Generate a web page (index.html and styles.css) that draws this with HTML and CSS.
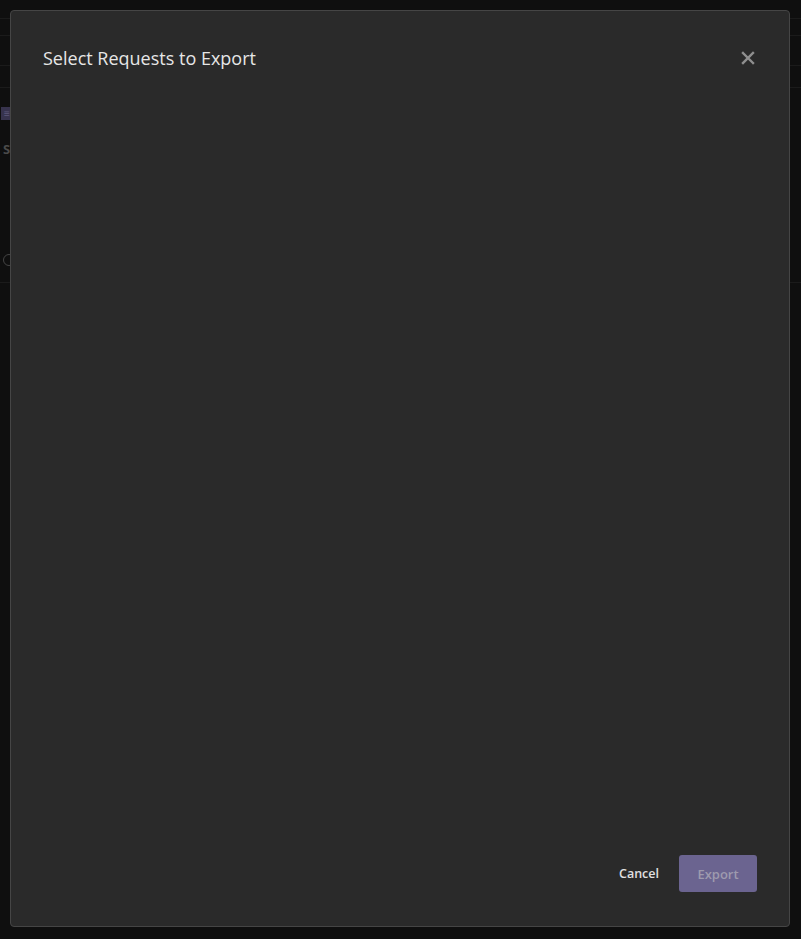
FILE: index.html
```html
<!DOCTYPE html>
<html lang="en">
<head>
<meta charset="utf-8">
<title>Select Requests to Export</title>
<link rel="stylesheet" href="styles.css">
</head>
<body>
<div class="app">
  <div class="app-line l1"></div>
  <div class="app-line l2"></div>
  <div class="app-line l3"></div>
  <div class="app-line l4"></div>
  <div class="app-badge">≡</div>
  <div class="app-s">S</div>
  <div class="app-clock"></div>
  <div class="app-line l5"></div>
</div>
<div class="backdrop">
  <div class="modal">
    <div class="modal-header">
      <h2 class="modal-title">Select Requests to Export</h2>
      <button class="close-btn" aria-label="Close">
        <svg width="14" height="14" viewBox="0 0 14 14"><path d="M2 2 L12 12 M12 2 L2 12" stroke="#8f8f8f" stroke-width="2.4" stroke-linecap="square"/></svg>
      </button>
    </div>
    <div class="modal-body"></div>
    <div class="modal-footer">
      <button class="btn-cancel">Cancel</button>
      <button class="btn-export" disabled>Export</button>
    </div>
  </div>
</div>
</body>
</html>
```
FILE: styles.css
```css
html, body {
  margin: 0;
  padding: 0;
  height: 100%;
  background: #0f0f0f;
  font-family: "Open Sans", "Noto Sans", sans-serif;
  overflow: hidden;
}
.app {
  position: relative;
  width: 100%;
  height: 100%;
}
.app-line {
  position: absolute;
  left: 0;
  right: 0;
  height: 1px;
  background: #1b1b1b;
}
.l1 { top: 18px; }
.l2 { top: 35px; }
.l3 { top: 65px; }
.l4 { top: 87px; }
.l5 { top: 282px; }
.app-badge {
  position: absolute;
  left: 1px;
  top: 107px;
  width: 14px;
  height: 13px;
  background: #37334d;
  color: #5d587a;
  font-size: 10px;
  line-height: 13px;
  padding-left: 3px;
}
.app-s {
  position: absolute;
  left: 3px;
  top: 140px;
  color: #4a4a4a;
  font-weight: 700;
  font-size: 13px;
}
.app-clock {
  position: absolute;
  left: 3px;
  top: 254px;
  width: 10px;
  height: 10px;
  border: 1.5px solid #444;
  border-radius: 50%;
}
.backdrop {
  position: absolute;
  inset: 0;
  padding: 10px 11px 12px 10px;
  box-sizing: border-box;
  display: flex;
}
.modal {
  flex: 1;
  display: flex;
  flex-direction: column;
  background: #2a2a2a;
  border: 1px solid #454545;
  border-radius: 4px;
  box-sizing: border-box;
}
.modal-header {
  display: flex;
  align-items: center;
  justify-content: space-between;
  padding: 33px 32px 0 32px;
}
.modal-title {
  margin: 0;
  font-weight: 400;
  font-size: 18px;
  line-height: 28px;
  color: #e6e6e6;
}
.close-btn {
  background: none;
  border: 0;
  padding: 0;
  width: 14px;
  height: 14px;
  margin-right: 2px;
  cursor: pointer;
  display: flex;
}
.modal-body {
  flex: 1;
}
.modal-footer {
  display: flex;
  justify-content: flex-end;
  align-items: center;
  gap: 20px;
  padding: 0 32px 34px 0;
}
.btn-cancel {
  background: none;
  border: 0;
  color: #e0e0e0;
  font-family: inherit;
  font-weight: 600;
  font-size: 12.5px;
  padding: 0;
}
.btn-export {
  background: #6b6490;
  border: 0;
  border-radius: 3px;
  color: #9e9aae;
  font-family: inherit;
  font-weight: 600;
  font-size: 13px;
  width: 78px;
  height: 37px;
  padding: 0;
}
```
